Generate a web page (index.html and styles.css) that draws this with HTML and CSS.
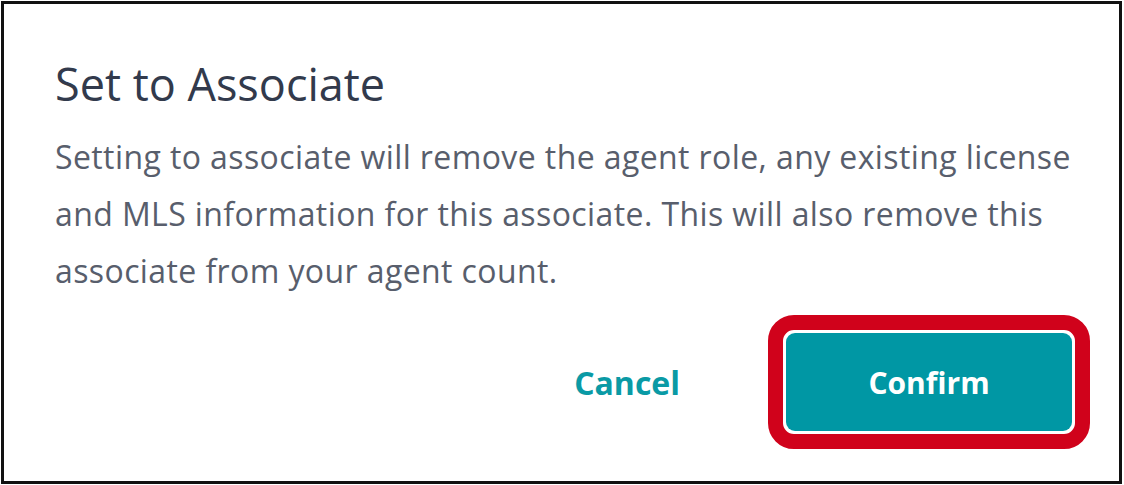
FILE: index.html
```html
<!DOCTYPE html>
<html lang="en">
<head>
    <meta charset="UTF-8">
    <meta name="viewport" content="width=device-width, initial-scale=1.0">
    <title>Set to Associate</title>
    <link rel="stylesheet" href="styles.css">
</head>
<body>
    <div class="dialog-frame">
        <div class="dialog">
            <h2 class="dialog-title">Set to Associate</h2>
            <p class="dialog-text">Setting to associate will remove the agent role, any existing license and MLS information for this associate. This will also remove this associate from your agent count.</p>
            <div class="dialog-actions">
                <button class="btn-link" type="button">Cancel</button>
                <div class="highlight">
                    <button class="btn-primary" type="button">Confirm</button>
                </div>
            </div>
        </div>
    </div>
</body>
</html>
```

FILE: styles.css
```css
body {
    margin: 0;
    background-color: #fff;
    font-family: "Open Sans", Lato, sans-serif;
}

.dialog-frame {
    box-sizing: border-box;
    margin: 1px 2px 1px 1px;
    height: 483px;
    border: 3px solid #111;
    background-color: #fff;
}

.dialog {
    padding: 50px 29px 0 51px;
}

.dialog-title {
    margin: 0 0 14px;
    font-size: 45px;
    font-weight: 500;
    line-height: 60px;
    color: #323a4c;
}

.dialog-text {
    max-width: 1030px;
    margin: 0;
    font-size: 32px;
    letter-spacing: 0.4px;
    line-height: 57px;
    color: #585e6c;
}

.dialog-actions {
    display: flex;
    justify-content: flex-end;
    align-items: center;
    gap: 88px;
    margin-top: 16px;
}

.btn-link {
    border: none;
    background: none;
    padding: 0;
    font-family: inherit;
    font-size: 32px;
    font-weight: 700;
    color: #0a9aa5;
}

.highlight {
    border: 15px solid #d0021b;
    border-radius: 26px;
    padding: 3px;
    background-color: #fff;
}

.btn-primary {
    display: block;
    width: 286px;
    height: 98px;
    border: none;
    border-radius: 9px;
    background-color: #0097a4;
    font-family: inherit;
    font-size: 30px;
    font-weight: 700;
    color: #fff;
}
```
